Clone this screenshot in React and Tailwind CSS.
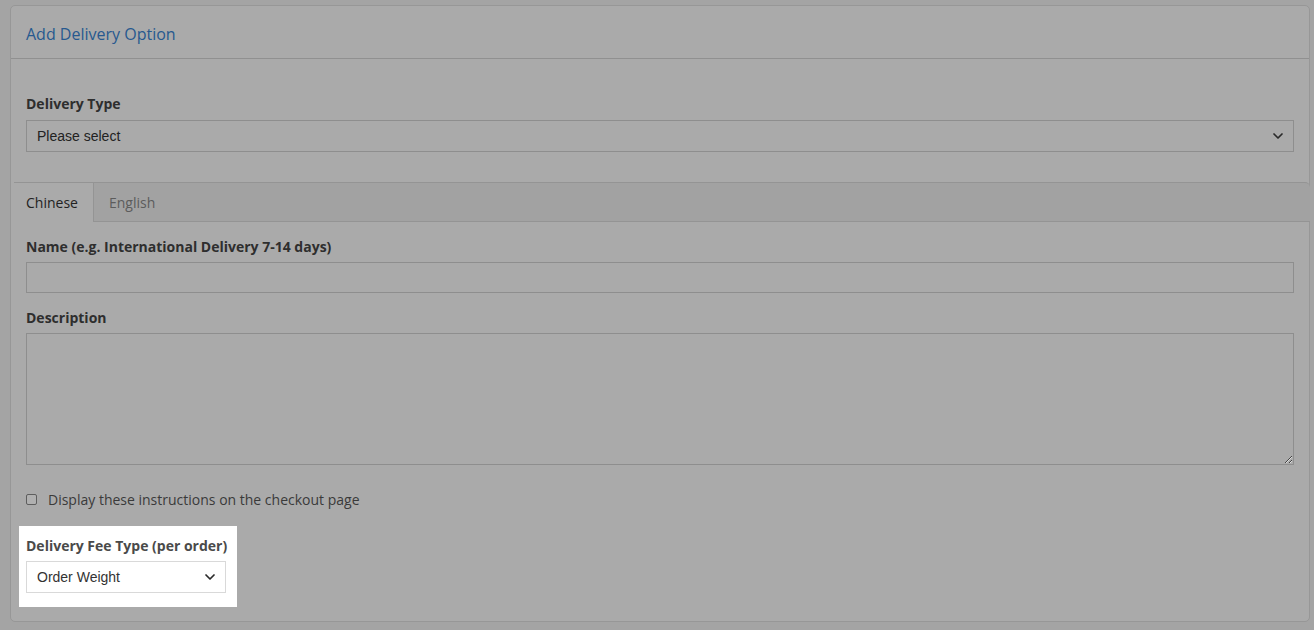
import { ChevronDown } from 'lucide-react'

const label = "block text-[14px] font-bold text-[#2e2e2e] leading-5 font-['Open_Sans',sans-serif]"

const SelectBox = ({ value, className = '' }) => (
  <div
    className={`flex items-center justify-between h-[32px] border border-[#8e8e8e] pl-[10px] pr-[7px] text-[14px] text-[#222] font-['Liberation_Sans',Arial,sans-serif] ${className}`}
  >
    <span>{value}</span>
    <ChevronDown className="w-[16px] h-[16px] text-[#2a2a2a]" strokeWidth={2.6} />
  </div>
)

const App = () => {
  return (
    <div className="w-[1314px] h-[630px] bg-[#a4a4a4] pt-[5px] pl-[10px] pr-[4px] overflow-hidden font-['Open_Sans',sans-serif]">
      <div className="h-[617px] bg-[#aaaaaa] border border-[#979797] rounded-[5px] flex flex-col">
        {/* Header */}
        <div className="h-[53px] flex items-center px-[15px] border-b border-[#909090] pt-[4px]">
          <h2 className="text-[16px] text-[#27598f]">Add Delivery Option</h2>
        </div>

        {/* Delivery type */}
        <div className="px-[15px] pt-[35px]">
          <label className={label}>Delivery Type</label>
          <SelectBox value="Please select" className="mt-[6px] h-[31px]" />
        </div>

        {/* Tabs */}
        <div className="mt-[30px] ml-[3px] -mr-px flex h-[40px] border-t border-[#949494] rounded-tr-[5px] bg-[#a2a2a2]">
          <div className="w-[80px] flex items-center pl-[12px] bg-[#aaaaaa] border-r border-[#949494] text-[14px] text-[#222]">
            Chinese
          </div>
          <div className="flex-1 flex items-center pl-[15px] border-b border-[#949494] text-[14px] text-[#5c5c5c]">
            English
          </div>
        </div>

        {/* Fields */}
        <div className="px-[15px] pt-[15px]">
          <label className={label}>Name (e.g. International Delivery 7-14 days)</label>
          <div className="mt-[5px] h-[31px] border border-[#8e8e8e]" />

          <label className={`${label} mt-[15px]`}>Description</label>
          <textarea
            className="mt-[5px] block w-full h-[132px] border border-[#8e8e8e] bg-transparent outline-none"
            readOnly
          />

          <div className="mt-[23px] flex items-center gap-[11px] h-[22px]">
            <span className="w-[11px] h-[11px] rounded-[2px] border border-[#5e5e5e] bg-[#b0b0b0]" />
            <span className="text-[14px] text-[#3a3a3a]">Display these instructions on the checkout page</span>
          </div>

          <div className="mt-[16px] -ml-[7px] w-[218px] h-[81px] bg-white px-[7px] pt-[10px]">
            <label className="block text-[14px] font-bold text-[#4a4a4a] leading-5 whitespace-nowrap">
              Delivery Fee Type (per order)
            </label>
            <SelectBox value="Order Weight" className="mt-[5px] w-[200px] border-[#d9d9d9] text-[#333] pr-[6px]" />
          </div>
        </div>
      </div>
    </div>
  )
}

export default App
